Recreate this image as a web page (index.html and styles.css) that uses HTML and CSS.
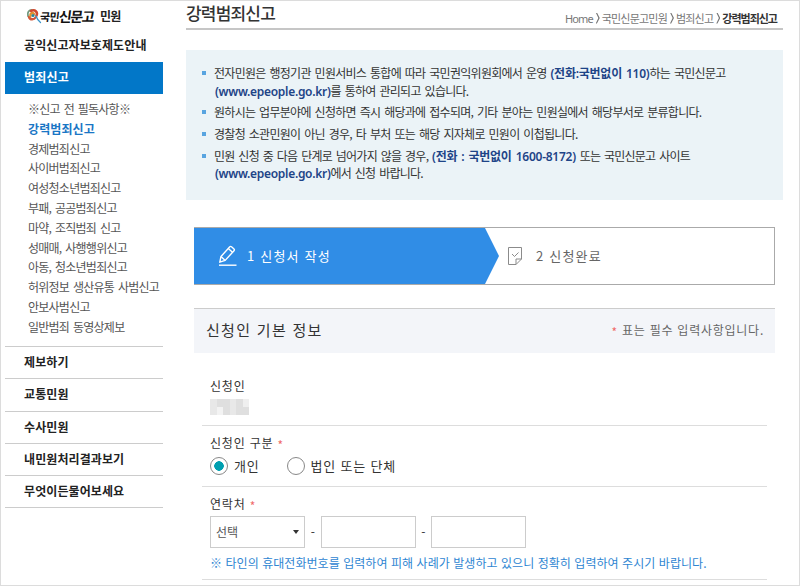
FILE: index.html
```html
<!DOCTYPE html>
<html lang="ko">
<head>
<meta charset="UTF-8">
<meta name="viewport" content="width=device-width, initial-scale=1.0">
<title>강력범죄신고</title>
<link rel="stylesheet" href="styles.css">
</head>
<body>
<div class="wrap">
  <aside class="side">
    <h1 class="logo">
      <svg width="16" height="16" viewBox="0 0 16 16" fill="none" stroke-linecap="round">
        <path d="M2 8C1 4 3 2 6 2" stroke="#6f9a80" stroke-width="1.800"/>
        <path d="M5 3C9 1 12 4 10.500 7.500" stroke="#cf4a30" stroke-width="2.600"/>
        <path d="M3 9C4 12 8 12 9.500 9.500" stroke="#d0583a" stroke-width="2.400"/>
        <path d="M4.500 8C4 5 7 4 8 6" stroke="#e0902f" stroke-width="2.400"/>
        <circle cx="7" cy="7.500" r="1.500" fill="#26869a"/>
        <path d="M10 8C11 11 12.500 13 14.500 14.500" stroke="#3b95c9" stroke-width="1.300"/>
      </svg>
      <span class="brush"><span class="small">국민</span><span class="big">신문고</span></span>
      <span class="name">민원</span>
    </h1>
    <a href="#" class="menu_top">공익신고자보호제도안내</a>
    <a href="#" class="menu_on">범죄신고</a>
    <ul class="sub">
      <li><a href="#">※신고 전 필독사항※</a></li>
      <li class="on"><a href="#">강력범죄신고</a></li>
      <li><a href="#">경제범죄신고</a></li>
      <li><a href="#">사이버범죄신고</a></li>
      <li><a href="#">여성청소년범죄신고</a></li>
      <li><a href="#">부패, 공공범죄신고</a></li>
      <li><a href="#">마약, 조직범죄 신고</a></li>
      <li><a href="#">성매매, 사행행위신고</a></li>
      <li><a href="#">아동, 청소년범죄신고</a></li>
      <li><a href="#">허위정보 생산유통 사범신고</a></li>
      <li><a href="#">안보사범신고</a></li>
      <li><a href="#">일반범죄 동영상제보</a></li>
    </ul>
    <ul class="menu">
      <li><a href="#">제보하기</a></li>
      <li><a href="#">교통민원</a></li>
      <li><a href="#">수사민원</a></li>
      <li><a href="#">내민원처리결과보기</a></li>
      <li><a href="#">무엇이든물어보세요</a></li>
    </ul>
  </aside>

  <main class="content">
    <div class="title">
      <h2>강력범죄신고</h2>
      <p class="path"><span>Home</span><i></i><span>국민신문고민원</span><i></i><span>범죄신고</span><i></i><strong>강력범죄신고</strong></p>
    </div>

    <ul class="notice">
      <li>전자민원은 행정기관 민원서비스 통합에 따라 국민권익위원회에서 운영 <b>(전화:국번없이 110)</b>하는 국민신문고<br><b class="url">(www.epeople.go.kr)</b>를 통하여 관리되고 있습니다.</li>
      <li>원하시는 업무분야에 신청하면 즉시 해당과에 접수되며, 기타 분야는 민원실에서 해당부서로 분류합니다.</li>
      <li>경찰청 소관민원이 아닌 경우, 타 부처 또는 해당 지자체로 민원이 이첩됩니다.</li>
      <li>민원 신청 중 다음 단계로 넘어가지 않을 경우, <b>(전화 : 국번없이 1600-8172)</b> 또는 국민신문고 사이트<br><b class="url">(www.epeople.go.kr)</b>에서 신청 바랍니다.</li>
    </ul>

    <ol class="step">
      <li class="on">
        <svg width="20" height="22" viewBox="0 0 20 22" fill="none" stroke="#fff" stroke-width="1.400" stroke-linejoin="round">
          <path d="M1.800 17.200L3 11.500L11.800 1.800Q12.600 1 13.500 1.700L16 4Q16.800 4.800 16 5.700L7.200 15.400Z"/>
          <path d="M3 11.500L7.200 15.400M10.300 3.500L14.500 7.300"/>
          <path d="M1 20.200H18.500"/>
        </svg>
        <span>1 신청서 작성</span>
      </li>
      <li>
        <svg width="16" height="20" viewBox="0 0 16 20" fill="none" stroke="#8b8b8b" stroke-width="1">
          <path d="M1.500 1.500H14.500V13L9 18.500H1.500Z"/>
          <path d="M14.500 13H9V18.500"/>
          <path d="M5 8L7.500 10.500L11.500 6.500"/>
        </svg>
        <span>2 신청완료</span>
      </li>
    </ol>

    <div class="form_head">
      <h3>신청인 기본 정보</h3>
      <p><em>*</em> 표는 필수 입력사항입니다.</p>
    </div>

    <form class="form">
      <div class="row row_name">
        <p class="label">신청인</p>
        <div class="masked"><i></i><i></i><i></i><i></i><i></i><i></i><i></i><i></i><i></i><i></i><i></i><i></i></div>
      </div>
      <div class="row row_kind">
        <p class="label">신청인 구분 <em>*</em></p>
        <div class="radios">
          <label><input type="radio" name="kind" checked><span>개인</span></label>
          <label><input type="radio" name="kind"><span>법인 또는 단체</span></label>
        </div>
      </div>
      <div class="row row_tel">
        <p class="label">연락처 <em>*</em></p>
        <div class="tel">
          <div class="select"><span>선택</span></div>
          <i>-</i>
          <input type="text">
          <i>-</i>
          <input type="text">
        </div>
        <p class="guide">※ 타인의 휴대전화번호를 입력하여 피해 사례가 발생하고 있으니 정확히 입력하여 주시기 바랍니다.</p>
      </div>
    </form>
  </main>
</div>
</body>
</html>
```

FILE: styles.css
```css
* {
  margin: 0;
  padding: 0;
  box-sizing: border-box;
}
body {
  font-family: "Noto Sans CJK KR", sans-serif;
  font-size: 12px;
  color: #333;
  background: #fff;
}
ul, ol {
  list-style: none;
}
a {
  color: inherit;
  text-decoration: none;
}
i, em {
  font-style: normal;
}
.wrap {
  display: flex;
  gap: 23px;
  width: 800px;
  height: 586px;
  padding-left: 4px;
  border: 1px solid #dcdcdc;
  overflow: hidden;
  white-space: nowrap;
}

/* 왼쪽 메뉴 */
.side {
  width: 158px;
}
.logo {
  display: flex;
  align-items: center;
  height: 30px;
  padding-left: 21px;
  font-size: 12px;
  line-height: 30px;
  color: #222;
}
.logo svg {
  margin-right: -2px;
}
.brush {
  display: flex;
  align-items: center;
  width: 56px;
  font-weight: 700;
  color: #111;
  transform: skewX(-7deg);
}
.brush .small {
  font-size: 11px;
  letter-spacing: -0.6px;
}
.brush .big {
  font-size: 14px;
  letter-spacing: -1.4px;
}
.name {
  margin-left: 4px;
  letter-spacing: -0.7px;
}
.menu_top, .menu_on {
  display: block;
  padding-left: 19px;
  font-weight: 700;
  line-height: 28px;
  letter-spacing: 0.1px;
  color: #222;
}
.menu_top {
  height: 31px;
}
.menu_on {
  height: 32px;
  line-height: 30px;
  letter-spacing: 0.2px;
  color: #fff;
  background: #0277c8;
}
.sub {
  height: 253px;
  padding: 5px 0 0 23px;
  border-bottom: 1px solid #ccc;
}
.sub li {
  height: 19.8px;
  line-height: 19px;
  letter-spacing: -0.75px;
  word-spacing: 1.2px;
  color: #555;
}
.sub .on {
  font-weight: 700;
  letter-spacing: 0.1px;
  color: #1976c5;
}
.menu li {
  height: 32.3px;
  padding-left: 19px;
  font-weight: 700;
  line-height: 29px;
  letter-spacing: 0.1px;
  color: #222;
  border-bottom: 1px solid #ccc;
}

/* 본문 */
.content {
  width: 597px;
}
.title {
  display: flex;
  justify-content: space-between;
  height: 29px;
  padding-right: 6px;
  border-bottom: 2px solid #c6c6c6;
}
.title h2 {
  font-size: 17px;
  font-weight: 500;
  line-height: 23px;
  letter-spacing: -0.8px;
}
.path {
  display: flex;
  align-items: center;
  padding-top: 7px;
  font-size: 11px;
  letter-spacing: -0.8px;
  color: #777;
}
.path span:first-child {
  font-family: "Noto Sans", sans-serif;
  letter-spacing: -0.9px;
}
.path i {
  width: 4px;
  height: 11px;
  margin: 0 2px 0 3px;
  background: #777;
  clip-path: polygon(0 0, 1.2px 0, 4px 50%, 1.2px 100%, 0 100%, 2.6px 50%);
}
.path strong {
  letter-spacing: -1px;
  color: #333;
}
.notice {
  height: 150px;
  margin-top: 20px;
  padding: 14px 0 0 28px;
  background: #ebf3f7;
}
.notice li {
  position: relative;
  margin-bottom: 4.3px;
  line-height: 17.5px;
  letter-spacing: -0.72px;
  word-spacing: 1.2px;
}
.notice li:last-child {
  letter-spacing: -0.76px;
}
.notice li::before {
  content: "";
  position: absolute;
  left: -12px;
  top: 7px;
  width: 4px;
  height: 4px;
  background: #58a4e0;
}
/* 영문 글꼴이 줄 높이를 밀지 않도록 */
.notice b {
  font-family: "Noto Sans", "Noto Sans CJK KR", sans-serif;
  font-weight: 600;
  line-height: 1;
  letter-spacing: -0.25px;
  color: #1e4487;
}
.notice .url {
  margin-left: 1px;
  letter-spacing: -0.3px;
}
.step {
  display: flex;
  width: 581px;
  height: 58px;
  margin: 27px 0 0 8px;
  border: 1px solid #aaa;
}
.step li {
  display: flex;
  align-items: center;
  font-size: 13px;
  letter-spacing: 1.2px;
  color: #666;
}
.step span {
  padding-bottom: 2px;
}
.step .on {
  width: 305px;
  margin: 0 8px 0 -1px;
  padding-left: 24px;
  color: #fff;
  background: #308de6;
  clip-path: polygon(0 0, 291px 0, 100% 50%, 291px 100%, 0 100%);
}
.step .on span {
  margin-left: 9px;
}
.step li:last-child span {
  margin-left: 13px;
}
.form_head {
  display: flex;
  justify-content: space-between;
  align-items: center;
  width: 581px;
  height: 45px;
  margin: 23px 0 0 8px;
  padding: 0 11px 3px 12px;
  border-top: 1px solid #ccc;
  background: #f3f5f9;
}
.form_head h3 {
  font-size: 15px;
  font-weight: 400;
  letter-spacing: 1.3px;
}
.form_head p {
  letter-spacing: 0.75px;
  color: #666;
}
em {
  position: relative;
  top: 2px;
  color: #f06a6a;
}
.form {
  width: 565px;
  margin-left: 16px;
}
.row {
  padding-left: 8px;
  border-bottom: 1px solid #ddd;
}
.label {
  line-height: 18px;
  letter-spacing: 0.8px;
}
.row_name {
  height: 73px;
  padding-top: 24px;
}
.row_kind {
  height: 61px;
  padding-top: 8px;
}
.row_tel {
  height: 93px;
  padding-top: 8px;
}
.masked {
  display: grid;
  grid-template-columns: repeat(6, 1fr);
  width: 39px;
  height: 16px;
  margin-top: 4px;
}
.masked i {
  background: #dfdfdf;
}
.masked i:nth-child(3n+1) {
  background: #e8e8e8;
}
.masked i:nth-child(6) {
  background: #efefef;
}
.masked i:nth-child(8) {
  background: #f3f3f3;
}
.radios {
  display: flex;
  gap: 27px;
  margin-top: 5px;
}
.radios label {
  display: flex;
  align-items: center;
  gap: 6px;
  height: 18px;
  font-size: 13px;
  letter-spacing: 0.8px;
}
.radios span {
  padding-bottom: 1px;
}
.radios input {
  appearance: none;
  width: 18px;
  height: 18px;
  border: 1px solid #888;
  border-radius: 50%;
}
.radios input:checked {
  background: radial-gradient(circle, #009fb0 4.5px, transparent 5px);
}
.tel {
  display: flex;
  align-items: center;
  margin-top: 3px;
}
.tel i {
  width: 15.5px;
  padding-bottom: 2px;
  text-align: center;
}
.tel input, .select {
  width: 95px;
  height: 32px;
  border: 1px solid #ccc;
}
.select {
  display: flex;
  justify-content: space-between;
  align-items: center;
  padding: 0 5px 1px;
  color: #555;
}
.select::after {
  content: "";
  border: 3.5px solid transparent;
  border-top: 4px solid #333;
  border-bottom: 0;
}
.guide {
  margin-top: 5px;
  line-height: 20px;
  letter-spacing: 0.05px;
  color: #2f86d2;
}
```
